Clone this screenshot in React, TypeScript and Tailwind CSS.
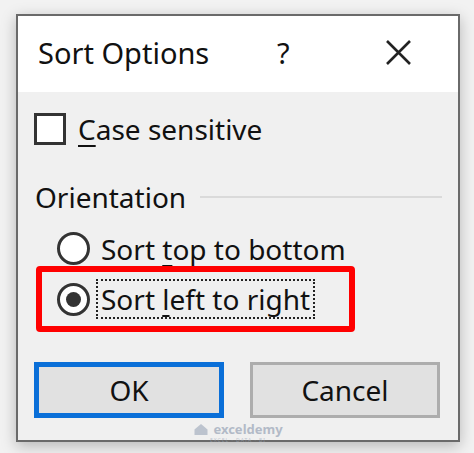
import React from "react";

const font = { fontFamily: '"Noto Sans", "Open Sans", sans-serif' };

function Radio({ checked }: { checked?: boolean }) {
  return (
    <div className="w-[33px] h-[33px] rounded-full border-[3px] border-[#333333] bg-white flex items-center justify-center shrink-0">
      {checked && <div className="w-[15px] h-[15px] rounded-full bg-[#333333]" />}
    </div>
  );
}

export default function App() {
  return (
    <div
      className="w-[474px] h-[453px] bg-[#f2f2f2] pl-[16px] pt-[14px] text-[#111111] overflow-hidden"
      style={font}
    >
      <div className="w-[444px] h-[428px] border-2 border-[#6a6a6a] bg-[#f0f0f0] shadow-[0_4px_14px_rgba(0,0,0,0.25)] flex flex-col">
        {/* Title bar */}
        <div className="h-[76px] bg-white flex items-center pl-[20px] pb-[4px] shrink-0">
          <span className="text-[29px] leading-none w-[239px]">Sort Options</span>
          <span className="text-[29px] leading-none">?</span>
          <div className="ml-[95px]">
            <svg width="27" height="27" viewBox="0 0 27 27">
              <path d="M2 2 L25 25 M25 2 L2 25" stroke="#222" strokeWidth="2.6" />
            </svg>
          </div>
        </div>

        {/* Body */}
        <div className="flex-1 flex flex-col px-[16px] pt-[21px]">
          <div className="flex items-center h-[32px]">
            <div className="w-[32px] h-[32px] border-[3px] border-[#333333] bg-white shrink-0" />
            <span className="text-[28px] leading-none ml-[12px]">
              <span className="underline underline-offset-[5px] decoration-2">C</span>ase sensitive
            </span>
          </div>

          <div className="flex items-center h-[36px] mt-[34px]">
            <span className="text-[28px] leading-none ml-[1px]">Orientation</span>
            <div className="flex-1 h-[2px] bg-[#dadada] ml-[14px]" />
          </div>

          <div className="flex items-center h-[33px] mt-[17px] ml-[23px]">
            <Radio />
            <span className="text-[28px] leading-none ml-[11px]">
              Sort <span className="underline underline-offset-[5px] decoration-2">t</span>op to bottom
            </span>
          </div>

          <div className="w-[319px] h-[66px] border-[6px] border-[#ff0000] rounded-[4px] ml-[2px] mt-[1px] flex items-center pl-[15px]">
            <Radio checked />
            <div className="ml-[6px] h-[40px] border-2 border-dotted border-[#222] flex items-center px-[3px]">
              <span className="text-[28px] leading-none">
                Sort <span className="underline underline-offset-[5px] decoration-2">l</span>eft to right
              </span>
            </div>
          </div>

          <div className="flex mt-[30px] gap-[26px]">
            <button className="w-[190px] h-[56px] bg-[#e1e1e1] border-[5px] border-[#0a6fd8] text-[28px] leading-none flex items-center justify-center">
              OK
            </button>
            <button className="w-[190px] h-[56px] bg-[#e1e1e1] border-[3px] border-[#adadad] text-[28px] leading-none flex items-center justify-center">
              Cancel
            </button>
          </div>

          <div className="flex flex-col items-center mt-[5px] opacity-60">
            <div className="flex items-center gap-[4px] h-[13px]">
              <svg width="16" height="13" viewBox="0 0 16 14">
                <path d="M1 7 L8 1 L15 7 L15 13 L1 13 Z" fill="#9aa6b8" />
              </svg>
              <span className="text-[13px] leading-[13px] font-bold text-[#8a97ad]">exceldemy</span>
            </div>
            <span className="text-[5px] leading-[6px] mt-[1px] text-[#9aa6b8] tracking-[1px]">EXCEL · DATA · BI</span>
          </div>
        </div>
      </div>
    </div>
  );
}
